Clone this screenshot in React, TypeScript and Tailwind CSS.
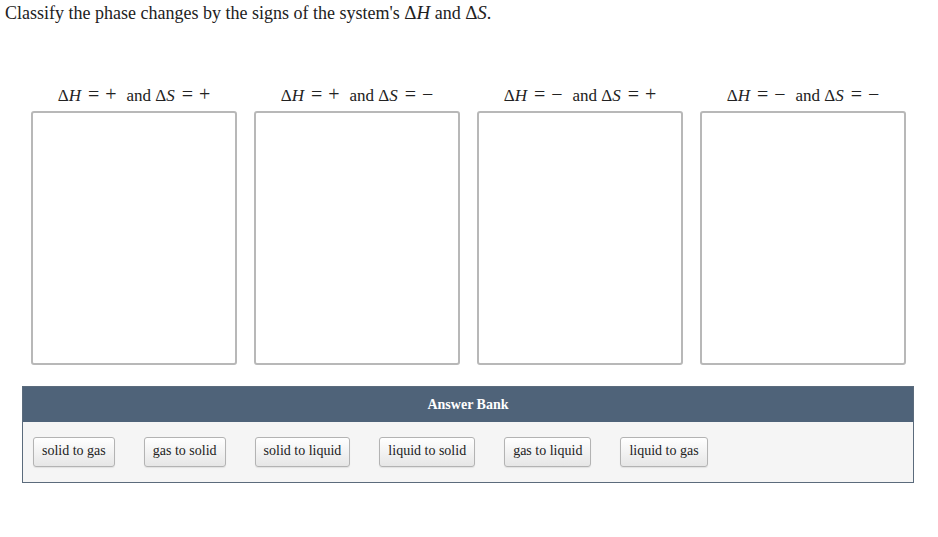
import React from "react";

const serif = { fontFamily: '"Liberation Serif", "Times New Roman", serif' };

function Sym({ v }: { v: string }) {
  return (
    <span>
      Δ<span className="italic">{v}</span>
    </span>
  );
}

function Label({ h, s }: { h: string; s: string }) {
  return (
    <div className="h-[20px] text-center text-[17px] leading-[20px] text-[#222] whitespace-nowrap">
      <Sym v="H" />
      <span className="ml-[7px] mr-[6px] text-[20px] leading-[16px]">=</span>
      <span className="text-[20px] leading-[16px]">{h}</span>
      <span className="ml-[10px]">and </span>
      <Sym v="S" />
      <span className="ml-[7px] mr-[6px] text-[20px] leading-[16px]">=</span>
      <span className="text-[20px] leading-[16px]">{s}</span>
    </div>
  );
}

const columns = [
  { h: "+", s: "+" },
  { h: "+", s: "−" },
  { h: "−", s: "+" },
  { h: "−", s: "−" },
];

const answers = [
  "solid to gas",
  "gas to solid",
  "solid to liquid",
  "liquid to solid",
  "gas to liquid",
  "liquid to gas",
];

export default function App() {
  return (
    <div className="w-[938px] h-[537px] bg-white text-[#222]" style={serif}>
      <div className="pl-[5px] pt-[2px] h-[24px] text-[18px] leading-[22px]">
        Classify the phase changes by the signs of the system's{" "}
        <span className="text-[19px] leading-[18px]">
          <Sym v="H" />
        </span>{" "}
        and{" "}
        <span className="text-[19px] leading-[18px]">
          <Sym v="S" />
        </span>
        .
      </div>

      <div className="mt-[62px] ml-[31px] grid grid-cols-[206px_206px_206px_206px] gap-x-[17px]">
        {columns.map((c, i) => (
          <div key={i} className="flex flex-col">
            <Label h={c.h} s={c.s} />
            <div className="mt-[5px] h-[254px] rounded-[3px] border-2 border-[#b8b8b8] bg-white" />
          </div>
        ))}
      </div>

      <div className="mt-[21px] ml-[22px] w-[892px] border border-[#5b6b7c]">
        <div className="h-[35px] bg-[#4f6379] flex items-center justify-center text-[14px] font-bold text-white">
          Answer Bank
        </div>
        <div className="bg-[#f5f5f5] flex gap-x-[29px] pl-[10px] pt-[15px] pb-[15px]">
          {answers.map((a) => (
            <div
              key={a}
              className="h-[30px] px-[8px] pb-[3px] flex items-center rounded-[3px] border border-[#b3b3b3] bg-gradient-to-b from-white to-[#e6e6e6] text-[14px] text-[#222] shadow-[0_1px_1px_rgba(0,0,0,0.08)]"
            >
              {a}
            </div>
          ))}
        </div>
      </div>
    </div>
  );
}
